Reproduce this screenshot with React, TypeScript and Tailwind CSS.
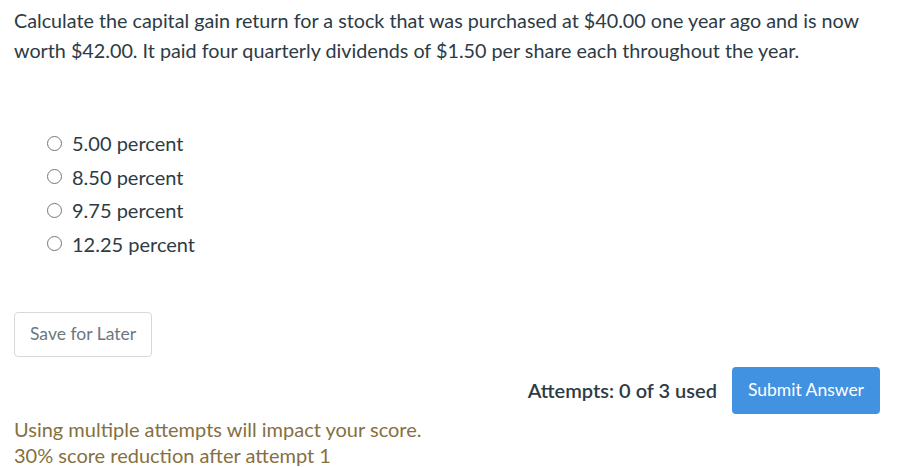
import { useState } from "react";

const options = ["5.00 percent", "8.50 percent", "9.75 percent", "12.25 percent"];

export default function App() {
  const [picked, setPicked] = useState<number | null>(null);

  return (
    <div className="w-[905px] h-[467px] bg-white text-[#2d3b45] font-['Lato','Noto_Sans',sans-serif] px-[14px] pt-[6px] overflow-hidden">
      {/* question */}
      <p className="text-[19.75px] leading-[30px] pr-[20px]">
        Calculate the capital gain return for a stock that was purchased at $40.00 one year ago and is now
        worth $42.00. It paid four quarterly dividends of $1.50 per share each throughout the year.
      </p>

      {/* answers */}
      <div className="mt-[65px] pl-[33px] flex flex-col gap-[9.5px]">
        {options.map((o, i) => (
          <label key={o} className="flex items-center gap-[10px] h-[24px] cursor-pointer text-[20px]">
            <input
              type="radio"
              name="answer"
              checked={picked === i}
              onChange={() => setPicked(i)}
              className="w-[15px] h-[15px] m-0 accent-[#0374b5]"
            />
            <span>{o}</span>
          </label>
        ))}
      </div>

      {/* save */}
      <button className="mt-[56px] h-[45px] px-[15px] rounded-[4px] border border-[#d7dadc] bg-white text-[17.5px] text-[#6b7780]">
        Save for Later
      </button>

      {/* submit row */}
      <div className="mt-[10px] flex items-center justify-end gap-[15px] pr-[11px]">
        <span className="text-[20px] font-semibold">Attempts: 0 of 3 used</span>
        <button className="h-[47px] px-[16px] rounded-[4px] bg-[#4192e1] text-white text-[17.5px]">Submit Answer</button>
      </div>

      {/* warning */}
      <div className="mt-[2px] text-[20px] leading-[26px] text-[#85703f]">
        <p>Using multiple attempts will impact your score.</p>
        <p>30% score reduction after attempt 1</p>
      </div>
    </div>
  );
}
